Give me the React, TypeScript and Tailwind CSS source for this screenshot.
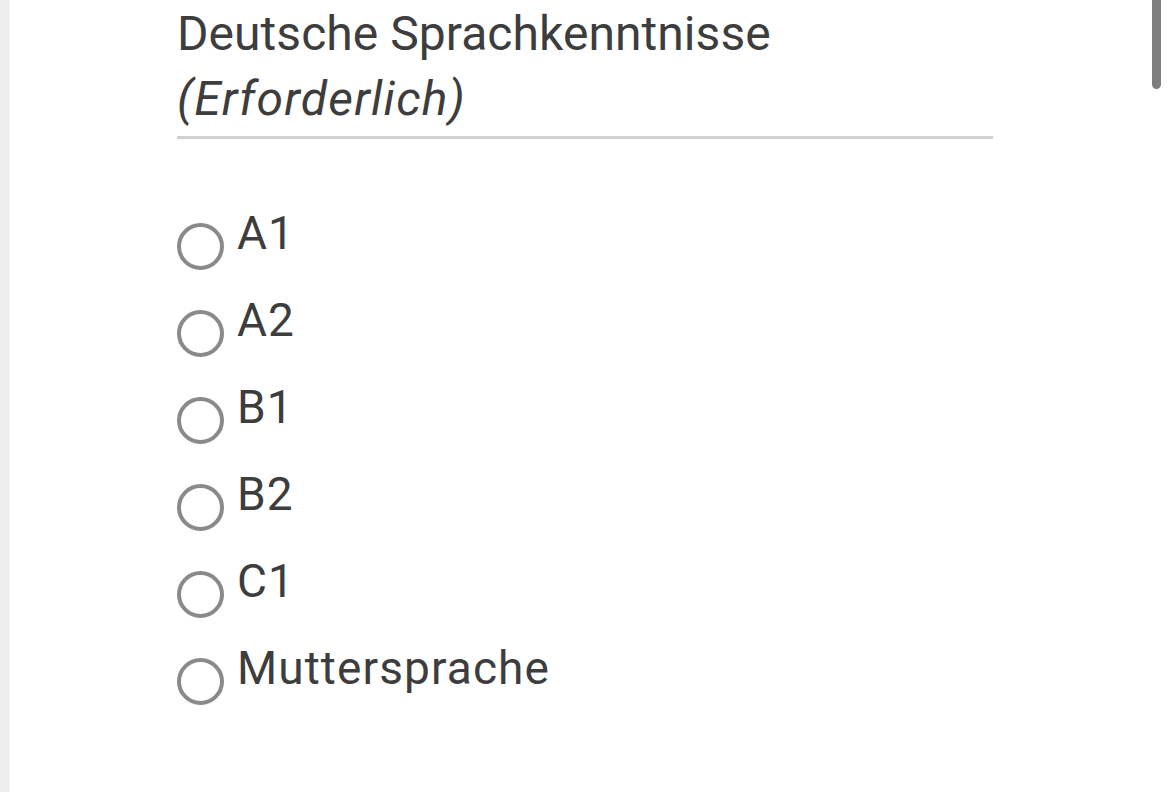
import React from "react";

const options = ["A1", "A2", "B1", "B2", "C1", "Muttersprache"];

export default function App() {
  return (
    <div
      className="relative flex min-h-screen w-full bg-white text-[#3d3d3d]"
      style={{ fontFamily: "Roboto, 'Liberation Sans', sans-serif" }}
    >
      <div className="w-[9px] shrink-0 bg-[#ededed]" />
      <div className="w-[4px] shrink-0 border-l border-[#f6f6f6]" />
      <div className="flex-1 pl-[164px]">
        <div className="w-[816px] border-b-[3px] border-[#d0d0d0] pb-[5px] pt-[1px]">
          <div className="text-[48px] leading-[65px] tracking-[0.05px]">Deutsche Sprachkenntnisse</div>
          <div className="text-[48px] italic leading-[65px] tracking-[1.2px]">(Erforderlich)</div>
        </div>
        <div className="mt-[73px] flex flex-col">
          {options.map((o) => (
            <label key={o} className="flex h-[87px] items-start">
              <span className="mt-[11px] block h-[47px] w-[47px] shrink-0 rounded-full border-[4px] border-[#8a8a8a]" />
              <span className="ml-[13px] -mt-[2px] text-[46px] leading-[46px] tracking-[1.1px]">{o}</span>
            </label>
          ))}
        </div>
      </div>
      <div className="absolute right-[9px] top-0 h-[89px] w-[9px] rounded-b-full bg-[#7f7f7f]" />
    </div>
  );
}
